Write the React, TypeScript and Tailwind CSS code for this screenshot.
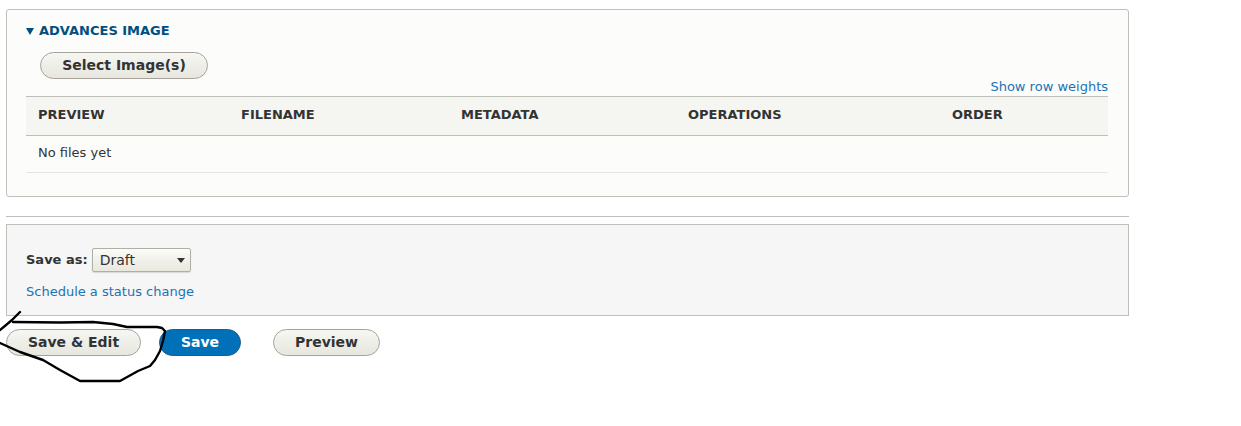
export default function App() {
  const btn = "h-[27px] rounded-[20px] border border-[#a6a29a] bg-gradient-to-b from-[#f6f6f3] to-[#e7e7df] pb-[2px] text-[14px] font-bold leading-none text-[#333333] flex items-center justify-center";
  const th = "pb-[2px] pl-3 text-left text-[13px] font-bold text-[#333333]";
  return (
    <div className="relative h-[426px] w-[1241px] overflow-hidden bg-white font-['DejaVu_Sans',sans-serif] text-[13px] text-[#333333]">
      <div className="ml-[6px] w-[1123px] pt-[9px]">
        <section className="h-[188px] rounded-[3px] border border-[#bfbfba] bg-[#fcfcfa] pl-[19px] pr-[20px] pt-[13px]">
          <div className="flex h-[16px] items-center gap-[5px] text-[13px] font-bold text-[#004f80]">
            <span className="h-0 w-0 border-x-[4px] border-t-[7px] border-x-transparent border-t-[#004f80]" />
            <span>ADVANCES IMAGE</span>
          </div>
          <button className={`${btn} ml-[14px] mt-[13px] w-[168px]`}>Select Image(s)</button>
          <div className="flex h-[17px] items-center justify-end pb-[2px] text-[13px] text-[#1a73b5]">Show row weights</div>
          <table className="w-[1082px] table-fixed border-collapse">
            <colgroup>
              <col className="w-[203px]" />
              <col className="w-[220px]" />
              <col className="w-[227px]" />
              <col className="w-[264px]" />
              <col className="w-[168px]" />
            </colgroup>
            <thead>
              <tr className="h-[39px] border-y border-[#bfbfba] bg-[#f5f5f2]">
                <th className={th}>PREVIEW</th>
                <th className={th}>FILENAME</th>
                <th className={th}>METADATA</th>
                <th className={th}>OPERATIONS</th>
                <th className={th}>ORDER</th>
              </tr>
            </thead>
            <tbody>
              <tr className="h-[37px] border-b border-[#e6e4df]">
                <td colSpan={5} className="pb-[2px] pl-3 text-[13px] text-[#333333]">No files yet</td>
              </tr>
            </tbody>
          </table>
        </section>
        <div className="mt-[19px] h-px bg-[#bfbfba]" />
        <section className="mt-[7px] h-[92px] border border-[#bfbfba] bg-[#f6f6f6] pl-[19px] pt-[23px]">
          <div className="flex items-center gap-[4px]">
            <span className="text-[13px] font-bold">Save as:</span>
            <div className="flex h-[24px] w-[99px] items-center justify-between rounded-[2px] border border-[#b0afa6] bg-gradient-to-b from-[#fbfbf8] to-[#e8e8df] pl-[7px] pr-[4px] text-[14px] text-[#333333] shadow-[0_1px_1px_rgba(0,0,0,0.12)]">
              <span>Draft</span>
              <span className="mr-[1px] h-0 w-0 border-x-[4px] border-t-[5px] border-x-transparent border-t-[#333333]" />
            </div>
          </div>
          <div className="mt-[10px] text-[13px] text-[#1a73b5]">Schedule a status change</div>
        </section>
        <div className="mt-[13px] flex">
          <button className={`${btn} w-[135px]`}>Save &amp; Edit</button>
          <button className="ml-[18px] flex h-[27px] w-[82px] items-center justify-center rounded-[20px] border border-[#1e5c90] bg-[#0071b8] pb-[2px] text-[14px] font-bold leading-none text-white">Save</button>
          <button className={`${btn} ml-[32px] w-[107px]`}>Preview</button>
        </div>
      </div>
      <svg className="pointer-events-none absolute left-0 top-0" width="1241" height="426" fill="none" stroke="#000000" strokeWidth="2.4" strokeLinejoin="round" strokeLinecap="round">
        <path d="M20 312L12 320L0 330" />
        <path d="M13 322L60 322.5L93 322L113 324L127 327L157 327L162 328L165 331L163 341L160 351L155 360L150 366L138 371L120 381L80 381L60 370L43 360L20 352L0 343" />
      </svg>
    </div>
  );
}
